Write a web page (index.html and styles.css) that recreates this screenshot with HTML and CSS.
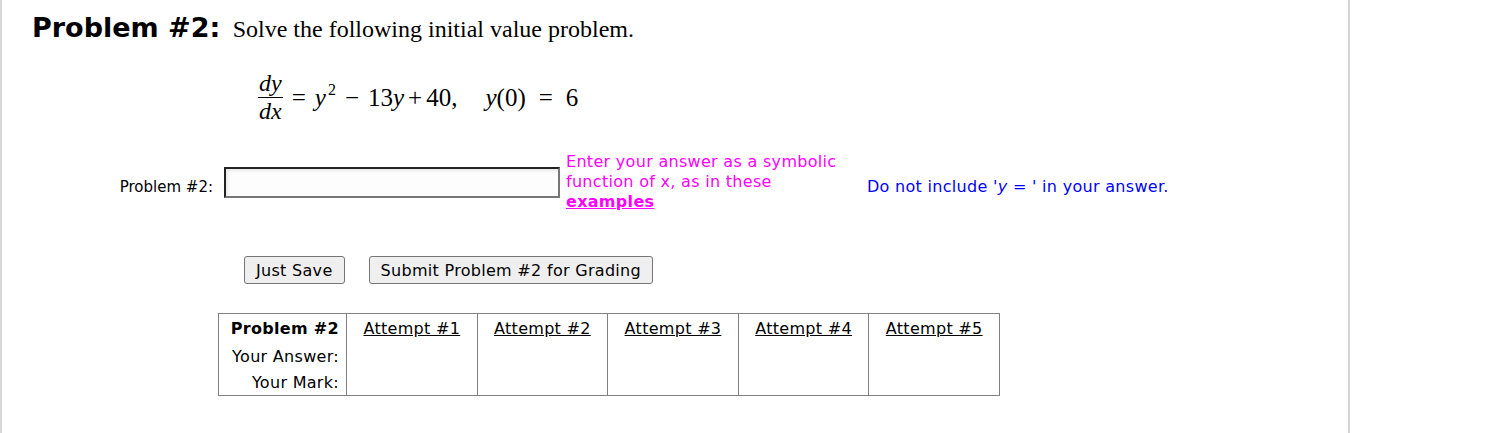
FILE: index.html
```html
<!DOCTYPE html>
<html lang="en">

<head>
    <meta charset="UTF-8">
    <meta name="viewport" content="width=device-width, initial-scale=1.0">
    <title>Problem #2</title>
    <link rel="stylesheet" href="styles.css">
</head>

<body>
    <div class="page">
        <h2 class="problem-title">Problem #2: <span class="problem-title__text">Solve the following initial value problem.</span></h2>

        <div class="equation">
            <span class="frac">
                <span class="frac__num">dy</span>
                <span class="frac__den">dx</span>
            </span>
            <span class="eq-op">=</span>
            <span class="var">y</span><sup class="sup">2</sup>
            <span class="eq-op">&minus;</span>
            <span>13<span class="var">y</span></span>
            <span class="eq-op eq-op--tight">+</span>
            <span>40,</span>
            <span class="eq-gap"></span>
            <span><span class="var">y</span>(0)</span>
            <span class="eq-op eq-op--wide">=</span>
            <span>6</span>
        </div>

        <form class="answer-form">
            <div class="answer-row">
                <label for="answer" class="answer-row__label">Problem #2:</label>
                <input type="text" id="answer" class="answer-row__input">
                <div class="hint">
                    Enter your answer as a symbolic<br>
                    function of x, as in these<br>
                    <a href="#" class="hint__link">examples</a>
                </div>
                <div class="note">Do not include '<i>y</i> = ' in your answer.</div>
            </div>

            <div class="buttons">
                <button type="button" class="button">Just Save</button>
                <button type="submit" class="button">Submit Problem #2 for Grading</button>
            </div>
        </form>

        <table class="attempts">
            <tr class="attempts__row">
                <th class="attempts__head">Problem #2</th>
                <td class="attempts__cell"><a href="#">Attempt #1</a></td>
                <td class="attempts__cell"><a href="#">Attempt #2</a></td>
                <td class="attempts__cell"><a href="#">Attempt #3</a></td>
                <td class="attempts__cell"><a href="#">Attempt #4</a></td>
                <td class="attempts__cell"><a href="#">Attempt #5</a></td>
            </tr>
            <tr class="attempts__row">
                <th class="attempts__label">Your Answer:</th>
                <td class="attempts__cell"></td>
                <td class="attempts__cell"></td>
                <td class="attempts__cell"></td>
                <td class="attempts__cell"></td>
                <td class="attempts__cell"></td>
            </tr>
            <tr class="attempts__row attempts__row--last">
                <th class="attempts__label">Your Mark:</th>
                <td class="attempts__cell"></td>
                <td class="attempts__cell"></td>
                <td class="attempts__cell"></td>
                <td class="attempts__cell"></td>
                <td class="attempts__cell"></td>
            </tr>
        </table>
    </div>
</body>

</html>
```

FILE: styles.css
```css
body {
    margin: 0;
    font-family: 'DejaVu Sans', Verdana, sans-serif;
    font-size: 16px;
    letter-spacing: 0.3px;
    color: #000;
    background: #fff;
}

.page {
    width: 1350px;
    min-height: 433px;
    box-sizing: border-box;
    border-left: 2px solid #d8d8d8;
    border-right: 2px solid #d4d4d4;
    padding: 12px 0 0 30px;
}

.problem-title {
    margin: 0;
    font-size: 27px;
    font-weight: bold;
    line-height: 32px;
    letter-spacing: 0;
}

.problem-title__text {
    margin-left: 3px;
    font-family: 'Liberation Serif', 'Times New Roman', serif;
    font-size: 24px;
    font-weight: normal;
}

/* equation */
.equation {
    display: flex;
    align-items: center;
    margin: 26px 0 0 226px;
    font-family: 'Liberation Serif', 'Times New Roman', serif;
    font-size: 25px;
    line-height: 1;
    letter-spacing: 0;
}

.var,
.frac {
    font-style: italic;
}

.frac {
    display: inline-flex;
    flex-direction: column;
    align-items: center;
    font-size: 24px;
}

.frac__num {
    padding: 0 1px 2px;
    border-bottom: 1px solid #000;
}

.frac__den {
    padding-top: 1px;
}

.eq-op {
    margin: 0 9px;
}

.sup {
    font-size: 16px;
    margin-left: 2px;
    align-self: flex-start;
    margin-top: 11px;
}

.eq-op--tight {
    margin: 0 4px;
}

.eq-op--wide {
    margin: 0 13px;
}

.eq-gap {
    width: 28px;
}

/* answer row */
.answer-form {
    margin: 0;
}

.answer-row {
    display: flex;
    align-items: center;
    margin-top: 29px;
}

.answer-row__label {
    width: 181px;
    text-align: right;
    margin-right: 11px;
    padding-top: 9px;
    font-size: 15px;
    letter-spacing: 0;
}

.answer-row__input {
    width: 336px;
    height: 31px;
    box-sizing: border-box;
    margin: 0 6px 0 0;
    border: 2px solid;
    border-color: #222 #777 #777 #222;
    background: #fdfdfd;
    box-shadow: inset 2px 2px 3px rgba(0, 0, 0, 0.08);
    font-size: 15px;
}

.hint {
    width: 301px;
    color: #ff00ff;
    line-height: 20px;
}

.hint__link {
    color: #ff00ff;
    font-weight: bold;
}

.note {
    color: #0000ff;
    padding-top: 9px;
}

/* buttons */
.buttons {
    display: flex;
    gap: 24px;
    margin: 44px 0 0 212px;
}

.button {
    font-family: 'DejaVu Sans', Verdana, sans-serif;
    font-size: 16px;
    letter-spacing: 0.3px;
    height: 28px;
    padding: 0 11px;
    color: #000;
    background-color: #efefef;
    border: 1px solid #767676;
    border-radius: 3px;
}

/* attempts table */
.attempts {
    margin: 29px 0 0 186px;
    border-collapse: collapse;
    border: 1px solid #808080;
}

.attempts th,
.attempts td {
    height: 28px;
    padding: 0 7px 0 0;
    text-align: right;
    font-weight: normal;
    vertical-align: middle;
}

.attempts__row--last th,
.attempts__row--last td {
    height: 25px;
}

.attempts th {
    width: 120px;
}

.attempts__head {
    font-weight: bold !important;
}

.attempts .attempts__cell {
    width: 129.6px;
    padding: 0;
    text-align: center;
    border-left: 1px solid #808080;
}

.attempts__cell a {
    color: #000;
}
```
